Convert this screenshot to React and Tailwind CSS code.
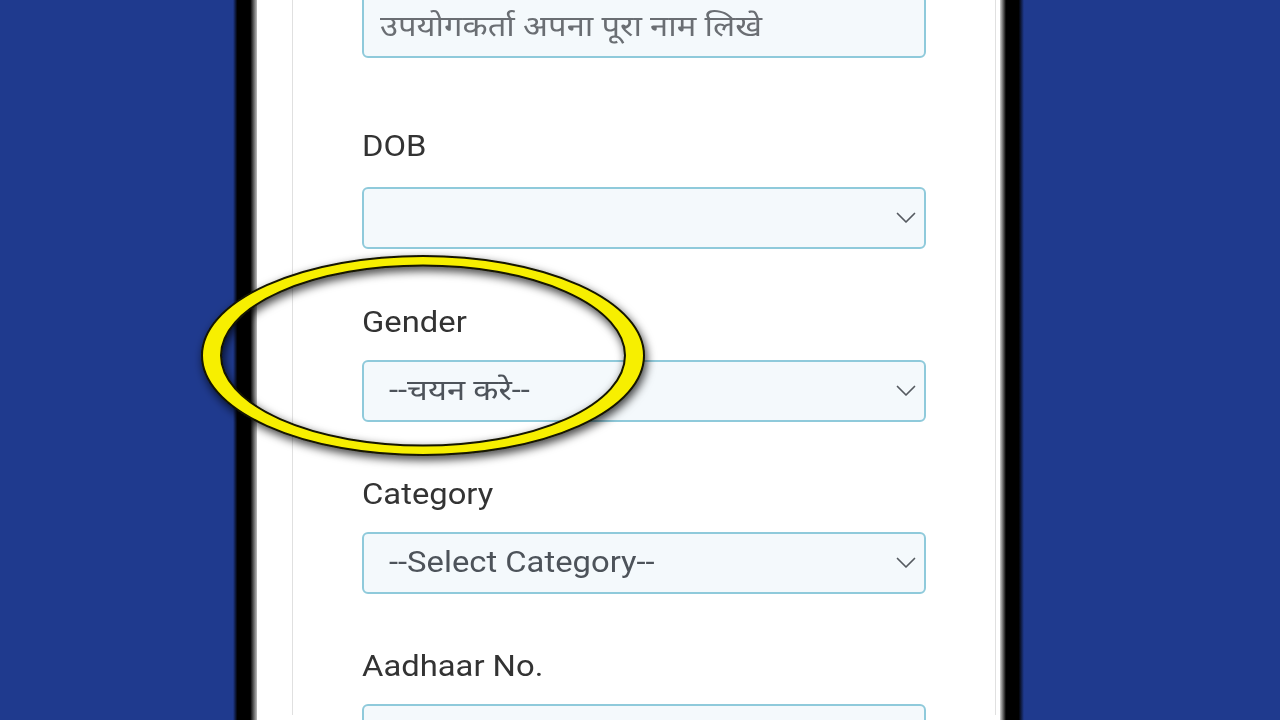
import React from 'react';

const FONT = { fontFamily: "Roboto, 'Noto Sans', 'Noto Sans Devanagari', 'Liberation Sans', sans-serif" };

// the phone capture is slightly stretched sideways, so text gets a horizontal scale
const Txt = ({ children, className = '' }) => (
  <span className={`inline-block origin-left scale-x-[1.13] whitespace-nowrap ${className}`}>{children}</span>
);

const Chevron = () => (
  <svg width="20" height="12" viewBox="0 0 20 12" fill="none">
    <polyline points="1.5,1.5 10,10 18.5,1.5" stroke="#555a60" strokeWidth="1.7" strokeLinecap="round" strokeLinejoin="round" />
  </svg>
);

const Label = ({ children, className = '' }) => (
  <div className={`h-[40px] leading-[40px] text-[29px] text-[#333333] ${className}`}>
    <Txt>{children}</Txt>
  </div>
);

const SelectBox = ({ value }) => (
  <div className="h-[62px] rounded-[6px] border-2 border-[#8fcadb] bg-[#f4f9fc] flex items-center justify-between pl-[25px] pr-[8px]">
    <Txt className="text-[29px] text-[#4d535a]">{value}</Txt>
    <Chevron />
  </div>
);

const Highlight = () => (
  <svg className="absolute left-[190px] top-[245px] pointer-events-none" width="470" height="225" viewBox="0 0 470 225">
    <defs>
      <filter id="ringShadow" x="-10%" y="-20%" width="120%" height="140%">
        <feDropShadow dx="2" dy="4" stdDeviation="5" floodColor="#000" floodOpacity="0.75" />
      </filter>
    </defs>
    <path
      filter="url(#ringShadow)"
      fillRule="evenodd"
      fill="#f7ef00"
      stroke="#141400"
      strokeWidth="2"
      d="M12 110.5 a221 99.5 0 1 0 442 0 a221 99.5 0 1 0 -442 0 Z M31 110.5 a202 90 0 1 0 404 0 a202 90 0 1 0 -404 0 Z"
    />
  </svg>
);

export default function App() {
  return (
    <div className="relative w-[1280px] h-[720px] overflow-hidden flex bg-[#1f3a8e]" style={FONT}>
      {/* left backdrop */}
      <div className="w-[233px] shrink-0 bg-[#1f3a8e]" />
      {/* phone bezel left */}
      <div className="w-[24px] shrink-0 bg-[linear-gradient(90deg,#1f3a8e_0%,#000_18%,#000_72%,#bdbdbd_100%)]" />

      {/* phone screen */}
      <div className="w-[743px] shrink-0 bg-white pl-[35px] pr-[4px]">
        <div className="h-full border-l border-r border-[#e0e0e0]">
          <div className="pl-[69px] w-[633px] -mt-[5px]">
            {/* name */}
            <div className="h-[63px] rounded-[6px] border-2 border-[#8fcadb] bg-[#f4f9fc] flex items-center pl-[16px]">
              <Txt className="text-[29px] text-[#6a6e73]">उपयोगकर्ता अपना पूरा नाम लिखे</Txt>
            </div>

            {/* DOB */}
            <Label className="mt-[68px] mb-[21px]">DOB</Label>
            <SelectBox value="" />

            {/* Gender */}
            <Label className="mt-[53px] mb-[18px]">Gender</Label>
            <SelectBox value="--चयन करे--" />

            {/* Category */}
            <Label className="mt-[52px] mb-[18px]">Category</Label>
            <SelectBox value="--Select Category--" />

            {/* Aadhaar */}
            <Label className="mt-[52px] mb-[18px]">Aadhaar No.</Label>
            <div className="h-[62px] rounded-[6px] border-2 border-[#8fcadb] bg-[#f4f9fc]" />
          </div>
        </div>
      </div>

      {/* phone bezel right */}
      <div className="w-[24px] shrink-0 bg-[linear-gradient(90deg,#cfcfcf_0%,#000_25%,#000_78%,#1f3a8e_100%)]" />
      <div className="flex-1 bg-[#1f3a8e]" />

      <Highlight />
    </div>
  );
}
